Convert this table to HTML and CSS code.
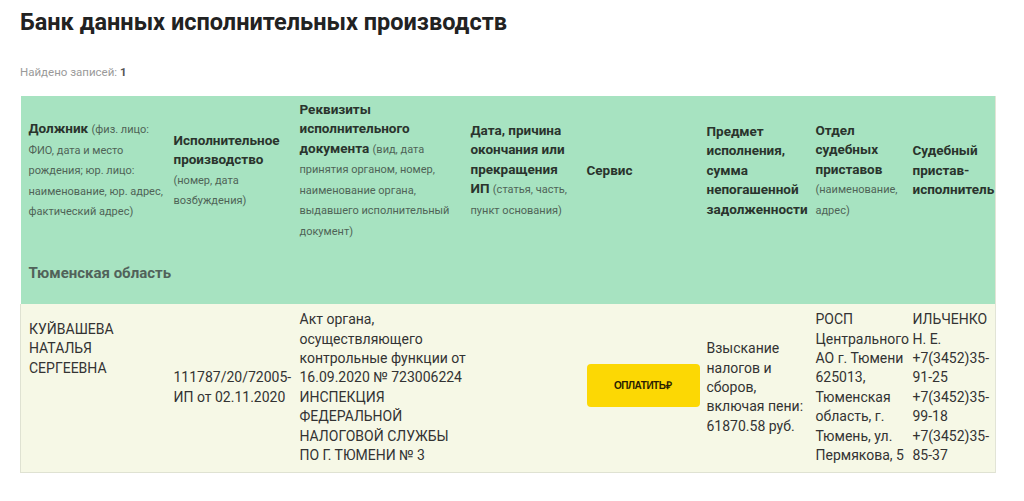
FILE: index.html
```html
<!DOCTYPE html>
<html lang="ru">
<head>
<meta charset="utf-8">
<title>Банк данных исполнительных производств</title>
<link rel="stylesheet" href="styles.css">
</head>
<body>
<main class="page">
  <h1 class="title">Банк данных исполнительных производств</h1>
  <p class="found">Найдено записей: <b>1</b></p>
  <div class="table-wrap">
    <table class="results">
      <colgroup>
        <col class="c1"><col class="c2"><col class="c3"><col class="c4"><col class="c5"><col class="c6"><col class="c7"><col class="c8">
      </colgroup>
      <thead>
        <tr class="head-row">
          <th class="first"><b>Должник</b> <span class="note">(физ. лицо: ФИО, дата и место рождения; юр. лицо: наименование, юр. адрес, фактический адрес)</span></th>
          <th><b>Исполнительное производство</b> <span class="note">(номер, дата возбуждения)</span></th>
          <th><b>Реквизиты исполнительного документа</b> <span class="note">(вид, дата принятия органом, номер, наименование органа, выдавшего исполнительный документ)</span></th>
          <th class="narrow"><b>Дата, причина окончания или прекращения ИП</b> <span class="note">(статья, часть, пункт основания)</span></th>
          <th><b>Сервис</b></th>
          <th><b>Предмет исполнения, сумма непогашенной задолженности</b></th>
          <th><b>Отдел судебных приставов</b> <span class="note">(наименование, адрес)</span></th>
          <th><b>Судебный пристав-исполнитель</b></th>
        </tr>
        <tr class="region-row">
          <th class="first region" colspan="8">Тюменская область</th>
        </tr>
      </thead>
      <tbody>
        <tr class="data-row">
          <td class="first name">КУЙВАШЕВА НАТАЛЬЯ СЕРГЕЕВНА</td>
          <td>111787/20/72005-ИП от 02.11.2020</td>
          <td>Акт органа, осуществляющего контрольные функции от 16.09.2020 № 723006224 ИНСПЕКЦИЯ ФЕДЕРАЛЬНОЙ НАЛОГОВОЙ СЛУЖБЫ ПО Г. ТЮМЕНИ № 3</td>
          <td class="narrow"></td>
          <td><a class="pay" href="#">ОПЛАТИТЬ<span class="rub">₽</span></a></td>
          <td>Взыскание налогов и сборов, включая пени: 61870.58 руб.</td>
          <td>РОСП Центрального АО г. Тюмени 625013, Тюменская область, г. Тюмень, ул. Пермякова, 5</td>
          <td>ИЛЬЧЕНКО Н. Е. +7(3452)35-91-25 +7(3452)35-99-18 +7(3452)35-85-37</td>
        </tr>
      </tbody>
    </table>
  </div>
</main>
</body>
</html>
```

FILE: styles.css
```css
html, body {
  margin: 0;
  padding: 0;
  background: #ffffff;
}
body {
  font-family: Roboto, "Liberation Sans", sans-serif;
  color: #333333;
}
.page {
  padding: 6px 28px 0 20px;
}
.title {
  margin: 0;
  font-size: 23.5px;
  line-height: 32px;
  font-weight: 700;
  color: #222222;
}
.found {
  margin: 26px 0 0;
  font-size: 11.5px;
  line-height: 16px;
  color: #9a9a9a;
}
.found b {
  color: #555555;
}
.table-wrap {
  margin-top: 16px;
  width: 976px;
  overflow: hidden;
  border-right: 1px solid #e2e4d6;
  box-sizing: border-box;
}
.results {
  border-collapse: collapse;
  table-layout: fixed;
  width: 980px;
}
.c1 { width: 153px; }
.c2 { width: 126px; }
.c3 { width: 171px; }
.c4 { width: 116px; }
.c5 { width: 120px; }
.c6 { width: 109px; }
.c7 { width: 97px; }
.c8 { width: 88px; }
.results th,
.results td {
  padding: 0 4px 0 0;
  text-align: left;
  vertical-align: middle;
}
.results .first {
  padding-left: 8px;
}
.results .narrow {
  padding-right: 14px;
}
.head-row th {
  background: #a7e3c1;
  height: 148px;
  box-sizing: border-box;
  padding-top: 1px;
  font-size: 13.5px;
  line-height: 19.5px;
  font-weight: 400;
  color: #2c3a31;
}
.head-row b {
  font-weight: 700;
  color: #2a342d;
}
.note {
  font-size: 11px;
  color: #4f6357;
}
.region-row th {
  background: #a7e3c1;
  height: 60px;
  box-sizing: border-box;
  padding-bottom: 2px;
  font-size: 15px;
  font-weight: 700;
  color: #51625a;
}
.data-row td {
  background: #f6f8e6;
  height: 168px;
  box-sizing: border-box;
  font-size: 14px;
  line-height: 19.4px;
  color: #333333;
  border-bottom: 1px solid #dfe2d2;
}
.data-row td.first {
  border-left: 1px solid #dfe2d2;
}
.data-row td.name {
  vertical-align: top;
  padding-top: 16px;
}
.pay {
  display: flex;
  align-items: center;
  justify-content: center;
  width: 113px;
  height: 43px;
  margin-bottom: 5px;
  background: #fcd804;
  border-radius: 4px;
  font-family: "Liberation Sans", Arial, sans-serif;
  font-size: 10px;
  font-weight: 700;
  letter-spacing: -0.5px;
  color: #2a1f00;
  text-decoration: none;
}
.rub {
  font-size: 10.5px;
  margin-left: 1px;
}
```
